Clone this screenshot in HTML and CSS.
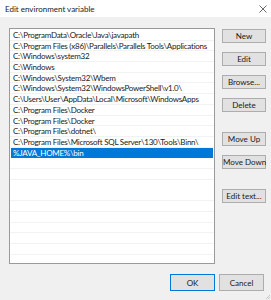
FILE: index.html
```html
<!DOCTYPE html>
<html lang="en">
<head>
    <meta charset="UTF-8">
    <meta name="viewport" content="width=device-width, initial-scale=1.0">
    <title>Edit environment variable</title>
    <link rel="stylesheet" href="styles.css">
</head>
<body>
    <div class="dialog">
        <div class="title-bar">
            <span class="title">Edit environment variable</span>
            <svg class="close" width="8" height="8" viewBox="0 0 8 8">
                <path d="M0.5 0.5 L7.5 7.5 M7.5 0.5 L0.5 7.5" stroke="#444" stroke-width="0.8" fill="none"/>
            </svg>
        </div>

        <div class="content">
            <div class="list">
                <div class="row">C:\ProgramData\Oracle\Java\javapath</div>
                <div class="row">C:\Program Files (x86)\Parallels\Parallels Tools\Applications</div>
                <div class="row">C:\Windows\system32</div>
                <div class="row">C:\Windows</div>
                <div class="row">C:\Windows\System32\Wbem</div>
                <div class="row">C:\Windows\System32\WindowsPowerShell\v1.0\</div>
                <div class="row">C:\Users\User\AppData\Local\Microsoft\WindowsApps</div>
                <div class="row">C:\Program Files\Docker</div>
                <div class="row">C:\Program Files\Docker</div>
                <div class="row">C:\Program Files\dotnet\</div>
                <div class="row">C:\Program Files\Microsoft SQL Server\130\Tools\Binn\</div>
                <div class="row selected">%JAVA_HOME%\bin</div>
            </div>

            <div class="buttons">
                <div class="group">
                    <button>New</button>
                    <button>Edit</button>
                    <button>Browse...</button>
                    <button>Delete</button>
                </div>
                <div class="group">
                    <button>Move Up</button>
                    <button>Move Down</button>
                </div>
                <div class="group">
                    <button>Edit text...</button>
                </div>
            </div>
        </div>

        <div class="footer">
            <button class="big default">OK</button>
            <button class="big">Cancel</button>
            <span class="grip"></span>
        </div>
    </div>
</body>
</html>
```

FILE: styles.css
```css
body {
    margin: 0;
    padding: 0;
    font-family: Lato, "Noto Sans", sans-serif;
    font-size: 8px;
    color: #1a1a1a;
}

.dialog {
    width: 271px;
    height: 300px;
    background: #f0f0f0;
    display: flex;
    flex-direction: column;
    position: relative;
}

.title-bar {
    height: 17px;
    background: #fff;
    display: flex;
    align-items: center;
    justify-content: space-between;
    padding: 0 4px 0 5px;
}

.title {
    font-size: 8px;
    color: #222;
}

.close {
    margin-top: 1px;
}

.content {
    display: flex;
    padding: 11px 0 0 9px;
    gap: 7px;
}

.list {
    width: 202px;
    height: 233px;
    border: 1px solid #9a9a9a;
    background-color: #fff;
    background-image: repeating-linear-gradient(to bottom, transparent 0, transparent 9.7px, #f2f2f2 9.7px, #f2f2f2 10.7px);
    background-position: 0 1px;
    padding: 1px 1px 0 1px;
    overflow: hidden;
}

.row {
    height: 10.7px;
    line-height: 10.7px;
    padding-left: 2px;
    letter-spacing: -0.25px;
    white-space: nowrap;
    overflow: hidden;
}

.row.selected {
    background: #0078d7;
    color: #fff;
}

.buttons {
    display: flex;
    flex-direction: column;
    gap: 20px;
    padding-top: 1px;
}

.group {
    display: flex;
    flex-direction: column;
    gap: 9px;
}

button {
    font-family: Lato, "Noto Sans", sans-serif;
    font-size: 8px;
    color: #1a1a1a;
    width: 44px;
    height: 14px;
    padding: 0;
    background: #e1e1e1;
    border: 1px solid #adadad;
    border-radius: 0;
    line-height: 12px;
    white-space: nowrap;
}

.footer {
    display: flex;
    justify-content: flex-end;
    gap: 4px;
    padding: 10px 7px 0 0;
}

button.big {
    width: 45px;
    height: 17px;
}

button.default {
    border-color: #0078d7;
}

.grip {
    position: absolute;
    right: 1px;
    bottom: 1px;
    width: 5px;
    height: 5px;
    background: linear-gradient(135deg, transparent 55%, #c8c8c8 55%, #c8c8c8 65%, transparent 65%, transparent 75%, #c8c8c8 75%, #c8c8c8 85%, transparent 85%);
}
```
